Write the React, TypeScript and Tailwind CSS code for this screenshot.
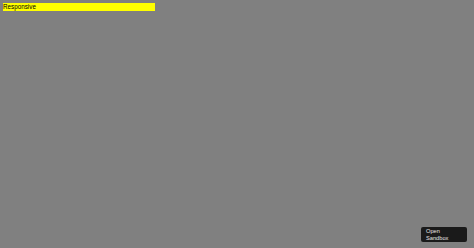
import React from "react";

export default function App() {
  return (
    <div className="relative w-[474px] h-[248px] bg-[#808080] overflow-hidden" style={{ fontFamily: '"Liberation Sans", Arial, sans-serif' }}>
      <div className="pt-[3px] pl-[3px]">
        <div className="w-[152px] h-[8px] bg-[#ffff00] text-black text-[6.3px] leading-[8px] whitespace-nowrap">Responsive</div>
      </div>
      <div className="absolute left-[421px] top-[227px] w-[46px] h-[15px] bg-[#1a1a1a] rounded-[2px] text-[#e5e5e5] text-[5.7px] leading-[6.5px] pl-[5px] pt-[1px]">
        <div>Open</div>
        <div>Sandbox</div>
      </div>
    </div>
  );
}
